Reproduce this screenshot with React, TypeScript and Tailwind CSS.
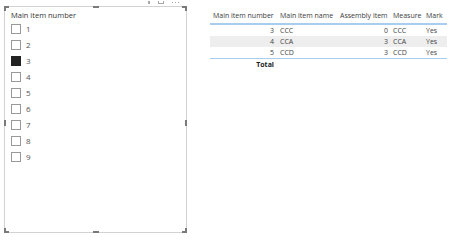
const items = [1, 2, 3, 4, 5, 6, 7, 8, 9]

const rows = [
  { num: 3, name: "CCC", asm: 0, measure: "CCC", mark: "Yes" },
  { num: 4, name: "CCA", asm: 3, measure: "CCA", mark: "Yes" },
  { num: 5, name: "CCD", asm: 3, measure: "CCD", mark: "Yes" },
]

function Handle({ className }: { className: string }) {
  return <div className={"absolute bg-[#7a7a7a] " + className} />
}

function Slicer() {
  return (
    <div className="relative ml-[4px] mt-[6px] w-[183px] h-[227px] border border-[#d2d2d2] bg-white">
      {/* resize handles */}
      <Handle className="-left-[1px] -top-[1px] w-[5px] h-[2px]" />
      <Handle className="-left-[1px] -top-[1px] w-[2px] h-[5px]" />
      <Handle className="-right-[1px] -top-[1px] w-[5px] h-[2px]" />
      <Handle className="-right-[1px] -top-[1px] w-[2px] h-[5px]" />
      <Handle className="-left-[1px] -bottom-[1px] w-[5px] h-[2px]" />
      <Handle className="-left-[1px] -bottom-[1px] w-[2px] h-[5px]" />
      <Handle className="-right-[1px] -bottom-[1px] w-[5px] h-[2px]" />
      <Handle className="-right-[1px] -bottom-[1px] w-[2px] h-[5px]" />
      <Handle className="left-[88px] -top-[1px] w-[6px] h-[2px]" />
      <Handle className="left-[88px] -bottom-[1px] w-[6px] h-[2px]" />
      <Handle className="-left-[1px] top-[113px] w-[2px] h-[6px]" />
      <Handle className="-right-[1px] top-[113px] w-[2px] h-[6px]" />

      {/* visual header icons, mostly cut off */}
      <div className="absolute -top-[6px] left-[143px] flex items-end gap-[8px]">
        <div className="w-[2px] h-[3px] bg-[#a8a8a8]" />
        <div className="w-[6px] h-[3px] border-b border-l border-r border-[#a8a8a8]" />
        <div className="flex gap-[2px] pb-[1px]">
          <div className="w-[1px] h-[1px] bg-[#a8a8a8]" />
          <div className="w-[1px] h-[1px] bg-[#a8a8a8]" />
          <div className="w-[1px] h-[1px] bg-[#a8a8a8]" />
        </div>
      </div>

      <div className="pl-[6px] pt-[3px]">
        <div className="text-[7.5px] leading-[10px] text-[#333] whitespace-nowrap">Main item number</div>
        <div className="mt-[4px] flex flex-col gap-[6px]">
          {items.map((n) => (
            <div key={n} className="flex items-center gap-[5px] h-[10px]">
              <div
                className={
                  n === 3
                    ? "w-[10px] h-[10px] bg-[#222] border border-[#222]"
                    : "w-[10px] h-[10px] border border-[#999] bg-white"
                }
              />
              <span className="text-[8px] leading-[10px] text-[#555]">{n}</span>
            </div>
          ))}
        </div>
      </div>
    </div>
  )
}

function DataTable() {
  return (
    <div className="ml-[23px] mt-[11px] text-[7px] leading-[10px] text-[#444] whitespace-nowrap">
      <div className="flex border-b-2 border-[#a9cdee] pb-[2px] text-[#3a3a3a]">
        <div className="w-[68px] pl-[3px]">Main item number</div>
        <div className="w-[60px] pl-[2px]">Main item name</div>
        <div className="w-[53px] pl-[2px]">Assembly item</div>
        <div className="w-[33px] pl-[2px]">Measure</div>
        <div className="w-[23px] pl-[2px]">Mark</div>
      </div>
      {rows.map((r, i) => (
        <div key={r.num} className={"flex h-[11px] items-center " + (i === 1 ? "bg-[#eeeeee]" : "")}>
          <div className="w-[68px] text-right pr-[4px]">{r.num}</div>
          <div className="w-[60px] pl-[2px]">{r.name}</div>
          <div className="w-[53px] text-right pr-[3px]">{r.asm}</div>
          <div className="w-[33px] pl-[2px]">{r.measure}</div>
          <div className="w-[23px] pl-[2px]">{r.mark}</div>
        </div>
      ))}
      <div className="border-t border-[#a9cdee] w-[237px]" />
      <div className="flex h-[12px] items-center font-bold text-[#222]">
        <div className="w-[68px] text-right pr-[4px]">Total</div>
      </div>
    </div>
  )
}

export default function App() {
  return (
    <div className="w-[474px] h-[244px] bg-white flex items-start overflow-hidden" style={{ fontFamily: '"Open Sans", "Noto Sans", sans-serif' }}>
      <Slicer />
      <DataTable />
    </div>
  )
}
